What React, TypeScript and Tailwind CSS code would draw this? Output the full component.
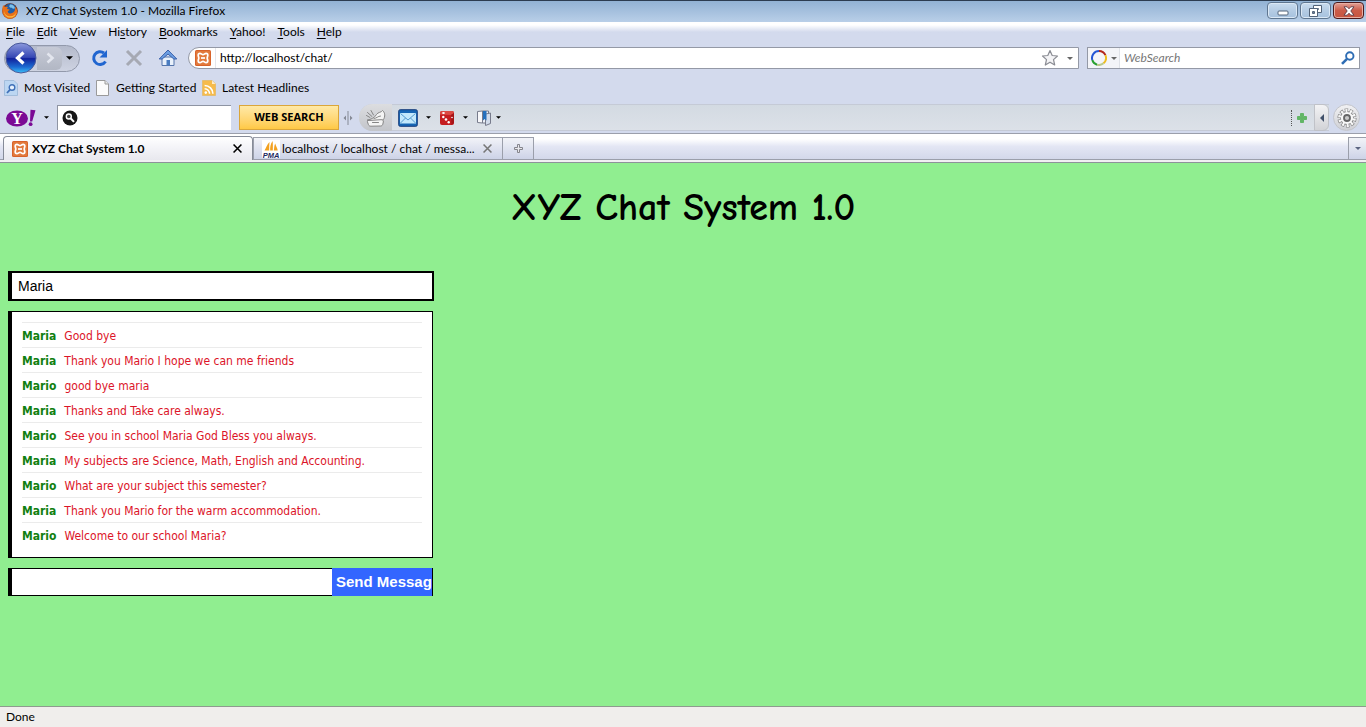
import React from "react";

const UI_FONT = "font-['Segoe_UI','Lato','Open_Sans',sans-serif]";

function Triangle({ className = "" }: { className?: string }) {
  return (
    <svg viewBox="0 0 8 4" className={className} aria-hidden="true">
      <path d="M0 0h8L4 4z" fill="currentColor" />
    </svg>
  );
}

function FirefoxIcon() {
  return (
    <svg viewBox="0 0 16 16" className="size-4" aria-hidden="true">
      <circle cx="8" cy="8" r="7.8" fill="#7a3110" />
      <circle cx="8.400" cy="6.400" r="5.800" fill="#1f5ea8" />
      <path d="M8 1.500c2.400-.3 4.600 1.400 5 3.700-1.200.8-2.600.6-3.200-.4-1 .2-2.200-.4-2.600-1.400z" fill="#7cc0e8" />
      <path d="M1 2.200c.8.400 1.600 1 2 1.800 1-.4 2.200-.3 3 .2-.8.600-1 1.200-.8 1.800l2.400.4c0 .9-1.500 1.100-1.900 2 .3 1.800 2.400 2.500 4.500 1.700 2.600-1 3.400-3.600 2.800-6.400 1.900 2 2.800 4.600 1.900 7.200C13.800 14 11 15.700 8 15.700c-4 0-7.300-3.200-7.600-7.300C.3 6.300.4 4.200 1 2.200z" fill="#e8701a" />
      <path d="M2.200 8c.4 3.500 3.200 5.600 6.400 5.300 2.600-.2 4.600-1.700 5.300-3.900 0 3-2.500 5.200-5.500 5.200C4.600 14.600 1.800 12 2.200 8z" fill="#fbc043" />
    </svg>
  );
}

function XamppIcon() {
  return (
    <svg viewBox="0 0 16 16" className="size-4 shrink-0" aria-hidden="true">
      <rect width="16" height="16" rx="1.500" fill="#d8622a" />
      <rect x=".9" y=".9" width="14.200" height="14.200" rx="1" fill="#e2793c" />
      <path d="M3.200 5.200c0-1.200.7-1.900 1.700-1.900 1.400 0 2 1.400 3.100 1.400s1.700-1.400 3.100-1.400c1 0 1.700.7 1.700 1.900 0 1.100-.6 1.700-.6 2.800s.6 1.700.6 2.800c0 1.200-.7 1.900-1.700 1.900-1.400 0-2-1.400-3.100-1.400s-1.700 1.400-3.100 1.400c-1 0-1.700-.7-1.700-1.900 0-1.100.6-1.700.6-2.800s-.6-1.700-.6-2.800z" fill="none" stroke="#fff" strokeWidth="1.700" />
      <path d="M6 8h4" stroke="#fff" strokeWidth="1.700" />
    </svg>
  );
}

function TitleBar() {
  return (
    <header className="flex h-[22px] items-start justify-between border-t border-[#2c3c50] bg-gradient-to-b from-[#92b2d4] to-[#b9cfe8] px-0.5">
      <div className="flex items-center gap-2">
        <FirefoxIcon />
        <span className="leading-5">XYZ Chat System 1.0 - Mozilla Firefox</span>
      </div>
      <div className="flex gap-[2px] pt-px">
        <button aria-label="Minimize" className="grid h-[17px] w-[31px] place-items-center rounded-sm border border-[#5f7690] bg-gradient-to-b from-[#c9dcef] via-[#b5cce4] to-[#a6c1de] shadow-[inset_0_0_0_1px_#dbe8f5]">
          <svg viewBox="0 0 12 8" className="mt-1 h-2 w-3" aria-hidden="true">
            <rect x="1" y="2" width="10" height="4" rx="1" fill="#fff" stroke="#53647a" />
          </svg>
        </button>
        <button aria-label="Restore" className="grid h-[17px] w-[31px] place-items-center rounded-sm border border-[#5f7690] bg-gradient-to-b from-[#c9dcef] via-[#b5cce4] to-[#a6c1de] shadow-[inset_0_0_0_1px_#dbe8f5]">
          <svg viewBox="0 0 13 12" className="h-3 w-[13px]" aria-hidden="true">
            <path d="M4.500.5h8v7h-8zM7.500 3.500h2v1h-2z" fill="#fff" stroke="#53647a" />
            <path d="M.5 3.500h8v8h-8zM3.500 6.500h2v2h-2z" fill="#fff" fillRule="evenodd" stroke="#53647a" />
          </svg>
        </button>
        <button aria-label="Close" className="grid h-[17px] w-[31px] place-items-center rounded-sm border border-[#4d1a1c] bg-gradient-to-b from-[#e2a096] via-[#cb5c49] to-[#c75540] shadow-[inset_0_0_0_1px_#e8b0a4]">
          <svg viewBox="0 0 12 10" className="h-2.5 w-3" aria-hidden="true">
            <path d="M1 .8h3.200L6 2.800 7.800.8H11L7.800 5 11 9.200H7.800L6 7.200l-1.800 2H1L4.200 5z" fill="#fff" stroke="#5b3a45" strokeWidth=".9" />
          </svg>
        </button>
      </div>
    </header>
  );
}

const menus: [string, string, string][] = [
  ["", "F", "ile"],
  ["", "E", "dit"],
  ["", "V", "iew"],
  ["Hi", "s", "tory"],
  ["", "B", "ookmarks"],
  ["", "Y", "ahoo!"],
  ["", "T", "ools"],
  ["", "H", "elp"],
];

function MenuBar() {
  return (
    <nav className="flex h-5 items-center gap-3 bg-gradient-to-b from-white from-15% to-[#d3daed] to-50% px-1.5">
      {menus.map(([before, key, after]) => (
        <button key={key + after} className="leading-5">
          {before}
          <span className="underline underline-offset-2">{key}</span>
          {after}
        </button>
      ))}
    </nav>
  );
}

function NavBar() {
  return (
    <div className="flex h-8 items-center pl-1 pr-1.5">
      <div className="flex h-[27px] w-[76px] shrink-0 items-center rounded-full border border-[#9299ab] bg-gradient-to-b from-[#b4bacb] to-[#ced3e2]">
        <button aria-label="Back" className="shrink-0">
          <svg viewBox="0 0 32 32" className="size-8" aria-hidden="true">
            <defs>
              <linearGradient id="back" x1="0" y1="0" x2="0" y2="1">
                <stop offset="0" stopColor="#8c99dd" />
                <stop offset=".48" stopColor="#3547b4" />
                <stop offset=".52" stopColor="#12229c" />
                <stop offset=".8" stopColor="#1c6bd2" />
                <stop offset="1" stopColor="#3cc0f8" />
              </linearGradient>
            </defs>
            <circle cx="16" cy="16" r="15" fill="url(#back)" stroke="#49599a" />
            <path d="M18.500 10.500L12.500 16l6 5.500" fill="none" stroke="#fff" strokeWidth="3.200" />
          </svg>
        </button>
        <button aria-label="Forward" className="grid h-[23px] w-[25px] place-items-center rounded-r-md bg-gradient-to-b from-[#c6cad6] to-[#b2b7c4]">
          <svg viewBox="0 0 12 12" className="size-3" aria-hidden="true">
            <path d="M3.500 1.500L8.500 6l-5 4.500" fill="none" stroke="#e3e6ee" strokeWidth="2.600" />
          </svg>
        </button>
        <button aria-label="Recent pages" className="ml-1">
          <Triangle className="h-1 w-[7px]" />
        </button>
      </div>
      <button aria-label="Reload" className="ml-2.5">
        <svg viewBox="0 0 20 20" className="size-5" aria-hidden="true">
          <path d="M15.500 13.500A6.400 6.400 0 1 1 14 5" fill="none" stroke="#2166d0" strokeWidth="3" />
          <path d="M17 2v7.500H9.500z" fill="#2166d0" />
        </svg>
      </button>
      <button aria-label="Stop" className="ml-3.5">
        <svg viewBox="0 0 20 20" className="size-5" aria-hidden="true">
          <path d="M3 3l14 14M17 3L3 17" stroke="#a6a9b3" strokeWidth="3" />
        </svg>
      </button>
      <button aria-label="Home" className="ml-3.5">
        <svg viewBox="0 0 20 20" className="size-5" aria-hidden="true">
          <path d="M4 9h12v8.500H4z" fill="#e9f1fb" stroke="#5575ab" />
          <path d="M8.500 12h3.500v5.500H8.500z" fill="#4a7cc0" />
          <path d="M10 2L1.200 11h3L10 6l5.800 5h3z" fill="#6c9ee2" stroke="#2f57a4" strokeWidth=".9" />
        </svg>
      </button>
      <div className="ml-2.5 flex h-[22px] flex-1 items-center rounded-l-full border border-[#9499a6] bg-white pl-1.5 pr-1">
        <XamppIcon />
        <div className="ml-1 h-5 w-px bg-[#e4e6ec]" />
        <input aria-label="Address" defaultValue="http://localhost/chat/" className="min-w-0 flex-1 bg-transparent pl-1 leading-5 outline-none" />
        <button aria-label="Bookmark this page">
          <svg viewBox="0 0 18 18" className="size-[18px]" aria-hidden="true">
            <path d="M9 1.500l2.200 5 5.300.5-4 3.600 1.200 5.400L9 13.200 4.300 16l1.200-5.400-4-3.600 5.300-.5z" fill="#f4f4f6" stroke="#8b8d94" strokeWidth="1.200" strokeLinejoin="round" />
          </svg>
        </button>
        <button aria-label="Show history" className="ml-2 mr-px text-[#666]">
          <Triangle className="h-[3px] w-1.5" />
        </button>
      </div>
      <div className="ml-2 flex h-[22px] w-[273px] items-center border border-[#9499a6] bg-white">
        <button aria-label="Choose search engine" className="flex h-5 w-8 items-center gap-1 border-r border-[#dfe2e8] bg-[#f3f4f8] pl-[3px] text-[#666]">
          <svg viewBox="0 0 16 16" className="size-4 shrink-0" fill="none" strokeWidth="2" aria-hidden="true">
            <path d="M8 1a7 7 0 0 1 6.400 4.200" stroke="#b3261c" />
            <path d="M14.400 5.200A7 7 0 0 1 12.500 13.300" stroke="#eebc1e" />
            <path d="M12.500 13.300a7 7 0 0 1-6.500 1.400" stroke="#b9c98a" />
            <path d="M6 14.700A7 7 0 0 1 1.300 10" stroke="#29a030" />
            <path d="M1.300 10A7 7 0 0 1 8 1" stroke="#2457d6" />
          </svg>
          <Triangle className="h-[3px] w-1.5" />
        </button>
        <input aria-label="Web search" placeholder="WebSearch" className="min-w-0 flex-1 pl-1 italic leading-5 outline-none placeholder:text-[#777]" />
        <button aria-label="Search" className="mr-1">
          <svg viewBox="0 0 14 14" className="size-3.5" fill="none" stroke="#2e6db4" aria-hidden="true">
            <circle cx="8.800" cy="5" r="3.700" strokeWidth="1.900" />
            <path d="M6 7.800L1 12.800" strokeWidth="2.600" />
          </svg>
        </button>
      </div>
    </div>
  );
}

function BookmarksBar() {
  return (
    <div className="flex h-7 items-center px-1">
      <a href="#most-visited" className="flex w-[92px] items-center gap-1">
        <svg viewBox="0 0 16 16" className="size-4 shrink-0" aria-hidden="true">
          <path d="M.5.500h9.500l3.500 3.500v11.500H.5z" fill="#bcd6f2" stroke="#a3bddb" />
          <circle cx="8" cy="7.500" r="2.800" fill="#e7f1fc" stroke="#3f70b8" strokeWidth="1.400" />
          <path d="M6 9.700L3 13" stroke="#3f70b8" strokeWidth="1.800" />
        </svg>
        <span className="whitespace-nowrap">Most Visited</span>
      </a>
      <a href="#getting-started" className="flex w-[106px] items-center gap-1">
        <svg viewBox="0 0 16 16" className="size-4 shrink-0" aria-hidden="true">
          <path d="M.5.500h8.500l3.500 3.500v11.500H.5z" fill="#fbfbfb" stroke="#9a9a9a" />
          <path d="M9 .500v3.500h3.500" fill="#e8e8e8" stroke="#9a9a9a" />
        </svg>
        <span className="whitespace-nowrap">Getting Started</span>
      </a>
      <a href="#latest-headlines" className="flex items-center gap-1">
        <svg viewBox="0 0 16 16" className="size-4 shrink-0" aria-hidden="true">
          <path d="M.5.500h9.500l3.500 3.500v11.500H.5z" fill="#f6bb4c" stroke="#e3bd74" />
          <path d="M10 .500v3.500h3.500" fill="#fdebc8" />
          <circle cx="3.800" cy="12.600" r="1.300" fill="#fff" />
          <path d="M2.600 8.800a5 5 0 0 1 5 5M2.600 5.500a8.300 8.300 0 0 1 8.300 8.300" fill="none" stroke="#fff" strokeWidth="1.600" />
        </svg>
        <span className="whitespace-nowrap">Latest Headlines</span>
      </a>
    </div>
  );
}

function YahooBar() {
  return (
    <div className="flex h-[31px] items-center px-1.5">
      <button aria-label="Yahoo!" className="flex items-center gap-2">
        <svg viewBox="0 0 30 18" className="h-[18px] w-[30px]" aria-hidden="true">
          <ellipse cx="11" cy="9.500" rx="11" ry="8" fill="#7b0a95" />
          <text x="11" y="15" textAnchor="middle" fontFamily="Liberation Serif, serif" fontWeight="700" fontSize="16" fill="#fff">Y</text>
          <path d="M24.500.8l5 .4-3.300 11.300h-2.200z" fill="#7b0a95" />
          <circle cx="24.600" cy="15.200" r="1.900" fill="#7b0a95" />
        </svg>
        <Triangle className="h-[3px] w-[5px]" />
      </button>
      <div className="ml-2 flex h-[25px] w-[174px] items-center border-l border-t border-[#8e94a3] bg-white pl-1">
        <svg viewBox="0 0 16 16" className="size-4 shrink-0" aria-hidden="true">
          <circle cx="8" cy="8" r="7.500" fill="#161616" />
          <circle cx="6.800" cy="6.500" r="2.500" fill="#444" stroke="#fff" strokeWidth="1.400" />
          <path d="M8.800 8.500l3.200 3.400" stroke="#fff" strokeWidth="2" />
        </svg>
        <input aria-label="Yahoo search" className="min-w-0 flex-1 pl-1 outline-none" />
      </div>
      <button className="ml-2 h-[25px] w-[100px] border border-[#dba63a] bg-gradient-to-b from-[#ffe9a6] to-[#ffc944] font-['Open_Sans',sans-serif] text-[11px] font-bold">
        WEB SEARCH
      </button>
      <svg viewBox="0 0 10 14" className="ml-1 h-3.5 w-2.5" fill="#858995" aria-hidden="true">
        <path d="M4.500 0h1v14h-1zM3 4.500v5L.5 7zM7 4.500v5L9.500 7z" />
      </svg>
      <div className="ml-1.5 flex h-[27px] flex-1 items-center rounded-l-full border-y border-[#c5cad6] bg-gradient-to-b from-[#d3dae2] to-[#dce1e8]">
        <button aria-label="Messenger" className="grid h-[27px] w-[33px] place-items-center rounded-l-full bg-gradient-to-b from-[#dcdde0] to-[#c3c5ca]">
          <svg viewBox="0 0 22 18" className="h-[18px] w-[22px]" fill="#f4f4f4" stroke="#858585" strokeLinejoin="round" strokeLinecap="round" aria-hidden="true">
            <path d="M2.500 11C6 10.500 9.500 9 11.500 5.500 13 3 16.500 3.500 17.500 1.500 19.500 3 20.500 6 19 9.500L17 12H4z" />
            <path d="M1.500 6.500l3.500 2M2.500 3.500l4.500 4M6 1.500l2.500 4.500M9 9.500c2.500 0 4-2.500 6.500-2.500" fill="none" />
            <path d="M3 11.500l13-.8c2-.2 2.600.8 2.300 2.300l-.5 2.200c-.3 1.200-1 1.700-2.200 1.800l-9.600.2c-1.400 0-2.200-.5-2.600-1.700L2.500 13c-.2-.8 0-1.300.5-1.500z" />
            <path d="M7.500 13.500h6" />
          </svg>
        </button>
        <button aria-label="Mail" className="ml-1.5 flex items-center gap-2">
          <svg viewBox="0 0 20 18" className="h-[18px] w-5" aria-hidden="true">
            <rect x=".7" y=".7" width="18.600" height="16.600" rx="1.500" fill="#1766b4" stroke="#183d7c" />
            <rect x="2" y="4" width="16" height="10.500" fill="#c3e9fc" />
            <path d="M2.500 4.500L10 11l7.500-6.500M2.500 14l5-5M17.500 14l-5-5" fill="none" stroke="#4791c8" strokeWidth=".9" />
          </svg>
          <Triangle className="h-[3px] w-[5px]" />
        </button>
        <button aria-label="Games" className="ml-2 flex items-center gap-2">
          <svg viewBox="0 0 16 16" className="size-4" aria-hidden="true">
            <rect x="1" y="1" width="14" height="14" rx="2" fill="#c51d20" />
            <path d="M1 4.500V3a2 2 0 0 1 2-2h10a2 2 0 0 1 2 2L12 5z" fill="#dc4a44" />
            <path d="M12 5l3-2v10l-2.500 2z" fill="#a51518" />
            <g fill="#fff">
              <ellipse cx="4.500" cy="3" rx="1.400" ry=".9" />
              <circle cx="4.300" cy="7" r="1.200" />
              <circle cx="7" cy="9.500" r="1.300" />
              <circle cx="9.700" cy="12.200" r="1.200" />
              <circle cx="13" cy="7.500" r=".8" />
            </g>
          </svg>
          <Triangle className="h-[3px] w-[5px]" />
        </button>
        <button aria-label="Bookmarks" className="ml-2 flex items-center gap-1">
          <svg viewBox="0 0 16 16" className="size-4" aria-hidden="true">
            <path d="M1.500 1.500l5-.5v12l-5-.5z" fill="#f7f7fa" stroke="#777b8c" />
            <path d="M6.500 1h6v12h-6z" fill="#eef2f8" stroke="#777b8c" />
            <path d="M9.500 4l5-1v10.500l-5 2z" fill="#d2dbea" stroke="#777b8c" />
            <path d="M7 1h3.500v9.500L8.700 9 7 10.500z" fill="#2670bd" />
          </svg>
          <Triangle className="h-[3px] w-[5px]" />
        </button>
        <div className="ml-auto mr-1 h-4 border-l border-dotted border-[#555]" />
        <svg viewBox="0 0 12 12" className="mr-1.5 size-3" aria-hidden="true">
          <path d="M4.500 1.500h3v3h3v3h-3v3h-3v-3h-3v-3h3z" fill="#62b666" stroke="#62b666" strokeLinejoin="round" />
        </svg>
        <button aria-label="Collapse toolbar" className="grid h-[27px] w-[15px] place-items-center rounded-r-md border border-[#c0c2c8] bg-gradient-to-b from-[#f3f3f5] to-[#d2d3d7]">
          <svg viewBox="0 0 4 8" className="h-2 w-1" aria-hidden="true">
            <path d="M4 0v8L0 4z" fill="#41506a" />
          </svg>
        </button>
      </div>
      <button aria-label="Toolbar settings" className="ml-1 grid size-[27px] place-items-center rounded-full border border-[#c3c5cb] bg-gradient-to-b from-[#f1f1f3] to-[#cfd0d5]">
        <svg viewBox="0 0 20 20" className="size-5" aria-hidden="true">
          <circle cx="10" cy="10" r="7.600" fill="none" stroke="#858585" strokeWidth="4" strokeDasharray="3.200 1.575" />
          <circle cx="10" cy="10" r="6.900" fill="#858585" />
          <circle cx="10" cy="10" r="7.200" fill="none" stroke="#f8f8f8" strokeWidth="3.400" strokeDasharray="2 2.524" strokeDashoffset="-.5" />
          <circle cx="10" cy="10" r="6.100" fill="#f8f8f8" />
          <circle cx="10" cy="10" r="3" fill="#c9c9c9" stroke="#666" strokeWidth="1.800" />
        </svg>
      </button>
    </div>
  );
}

function CloseGlyph({ className = "" }: { className?: string }) {
  return (
    <svg viewBox="0 0 8 8" className={className} aria-hidden="true">
      <path d="M.5.5l7 7M7.500.5l-7 7" stroke="currentColor" strokeWidth="1.400" />
    </svg>
  );
}

function TabStrip() {
  return (
    <div className="flex h-[30px] flex-col border-b border-t border-b-[#8d9299] border-t-[#9b9fab] bg-[#f0f0f2]">
      <div className="flex flex-1 items-end border-b border-[#9b9fab] bg-gradient-to-b from-white from-20% via-[#e3e6f4] to-[#d3d8ea] pl-[3px]">
        <div className="-mb-px flex h-6 w-[250px] items-center rounded-t border border-b-0 border-[#868b98] bg-gradient-to-b from-white via-[#f4f4f8] via-45% to-[#e8e8ee] pl-2 pr-2.5">
          <XamppIcon />
          <span className="ml-1 flex-1 whitespace-nowrap font-bold">XYZ Chat System 1.0</span>
          <button aria-label="Close tab">
            <CloseGlyph className="size-[9px]" />
          </button>
        </div>
        <div className="flex h-[22px] w-[250px] items-center border-x border-t border-[#9b9fab] bg-gradient-to-b from-[#f2f3f8] via-[#e0e3f0] via-45% to-[#cdd3e7] pl-2 pr-2.5">
          <svg viewBox="0 0 18 18" className="size-[18px] shrink-0" aria-hidden="true">
            <rect width="18" height="18" fill="#fff" />
            <path d="M2.500 10.500C4 8 5 4.500 7.500 2c-.3 3-.3 5.500-.3 8.500zM8.200 10.500c-.2-3 .2-6.500 2.400-9.500.3 3 .3 6 .2 9.500zM11.800 10.500c.5-2.500.2-4.500 1.400-7 .8 3 2.300 4.500 2.500 7z" fill="#f3a11f" />
            <text x="9" y="17.500" textAnchor="middle" fontFamily="Liberation Sans, sans-serif" fontWeight="700" fontStyle="italic" fontSize="7.500" fill="#23285e">PMA</text>
          </svg>
          <span className="ml-0.5 flex-1 whitespace-nowrap">localhost / localhost / chat / messa...</span>
          <button aria-label="Close tab" className="text-[#777]">
            <CloseGlyph className="size-[9px]" />
          </button>
        </div>
        <button aria-label="New tab" className="grid h-[22px] w-[31px] place-items-center border-r border-t border-[#9b9fab] bg-gradient-to-b from-[#f2f3f8] to-[#cdd3e7]">
          <svg viewBox="0 0 9 9" className="size-[9px]" aria-hidden="true">
            <path d="M3.500.5h2v3h3v2h-3v3h-2v-3h-3v-2h3z" fill="#e8e8ec" stroke="#85858c" />
          </svg>
        </button>
        <button aria-label="List all tabs" className="ml-auto grid h-[22px] w-[18px] place-items-center border-l border-t border-[#9b9fab] bg-gradient-to-b from-[#f2f3f8] to-[#cdd3e7] text-[#5b6480]">
          <Triangle className="h-[3px] w-1.5" />
        </button>
      </div>
      <div className="h-0.5" />
    </div>
  );
}

const messages = [
  { name: "Maria", text: "Good bye" },
  { name: "Maria", text: "Thank you Mario I hope we can me friends" },
  { name: "Mario", text: "good bye maria" },
  { name: "Maria", text: "Thanks and Take care always." },
  { name: "Mario", text: "See you in school Maria God Bless you always." },
  { name: "Maria", text: "My subjects are Science, Math, English and Accounting." },
  { name: "Mario", text: "What are your subject this semester?" },
  { name: "Maria", text: "Thank you Mario for the warm accommodation." },
  { name: "Mario", text: "Welcome to our school Maria?" },
];

function ChatPage() {
  return (
    <main className="flex-1 bg-[#90ee90] px-2 pt-5">
      <h1 className="text-center font-['Comic_Sans_MS','Comic_Neue','Noto_Sans',sans-serif] text-[38px] font-bold leading-[50px] text-black">
        XYZ Chat System 1.0
      </h1>
      <div className="mt-[38px] flex max-w-[426px] flex-col gap-2.5">
        <input
          aria-label="Your name"
          defaultValue="Maria"
          className="h-[30px] border-2 border-l-4 border-black bg-white pl-1.5 font-['Liberation_Sans',sans-serif] text-sm text-black outline-none"
        />
        <ul className="mr-px border border-l-4 border-black bg-white p-2.5 font-['Tahoma','DejaVu_Sans_Condensed',sans-serif] text-xs">
          {messages.map((message, index) => (
            <li key={index} className="flex h-[25px] items-center gap-2 border-t border-[#ebebeb] pt-px">
              <span className="font-bold text-[#118011]">{message.name}</span>
              <span className="whitespace-nowrap text-[#dc1428]">{message.text}</span>
            </li>
          ))}
        </ul>
        <form className="mr-px flex h-7 border-r border-black" onSubmit={(event) => event.preventDefault()}>
          <input
            aria-label="Message"
            className="min-w-0 flex-1 border-y border-l-4 border-black bg-white px-1.5 font-['Liberation_Sans',sans-serif] text-sm outline-none"
          />
          <button className="w-[100px] overflow-hidden whitespace-nowrap bg-[#3366ff] pl-1 text-left font-['Liberation_Sans',sans-serif] text-[15px] font-bold text-white">
            Send Messag
          </button>
        </form>
      </div>
    </main>
  );
}

export default function App() {
  return (
    <div className={`flex min-h-screen flex-col bg-[#d3daed] text-xs text-black ${UI_FONT}`}>
      <TitleBar />
      <MenuBar />
      <NavBar />
      <BookmarksBar />
      <YahooBar />
      <TabStrip />
      <ChatPage />
      <footer className="flex h-[21px] items-center border-t border-[#8f9a8f] bg-[#f0eeec] px-1.5">Done</footer>
    </div>
  );
}
